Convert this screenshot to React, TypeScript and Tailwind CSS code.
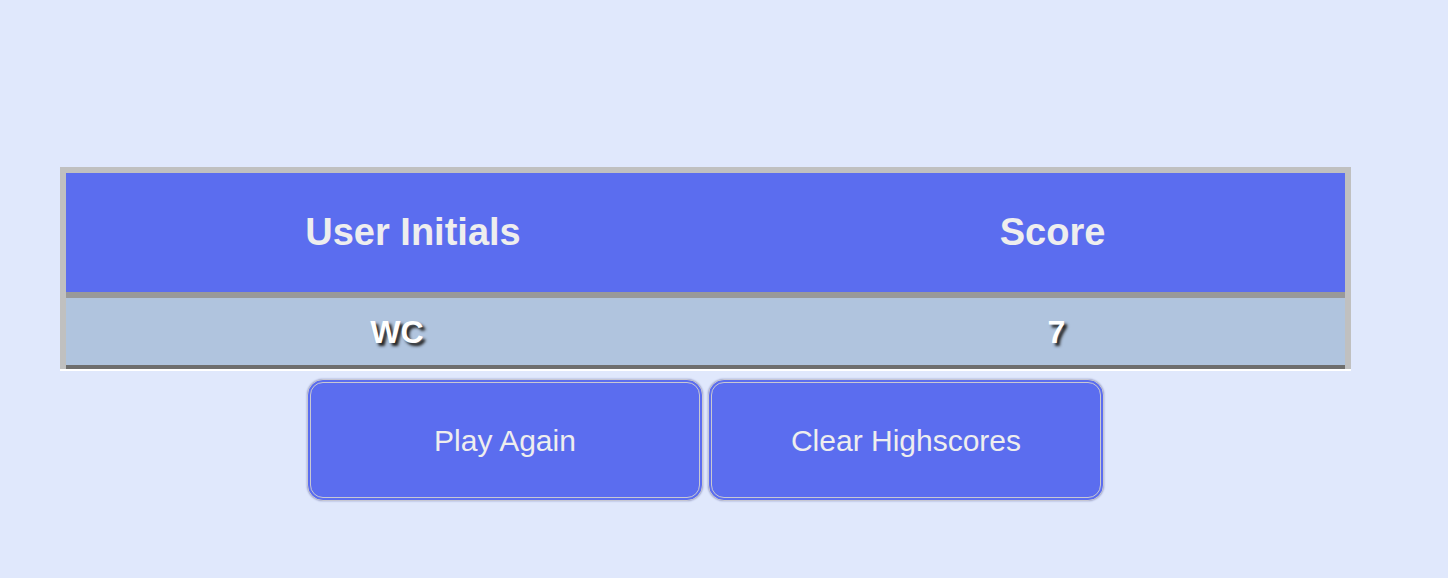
import React from "react";

const scores = [{ initials: "WC", score: 7 }];

export default function App() {
  return (
    <div
      className="min-h-[578px] w-full bg-[#e0e8fc] pt-[167px]"
      style={{ fontFamily: '"Liberation Sans", Arial, Helvetica, sans-serif' }}
    >
      <div className="ml-[60px] w-[1291px]">
        {/* Highscore table */}
        <div className="border-x-[6px] border-t-[6px] border-[#c0c0c0]">
          <div className="grid grid-cols-[694px_1fr] h-[119px] bg-[#5b6def] text-[38px] font-bold text-[#eeeeee]">
            <div className="flex items-center justify-center">User Initials</div>
            <div className="flex items-center justify-center">Score</div>
          </div>
          <div className="h-[6px] bg-[#999999]" />
          {scores.map((s) => (
            <div
              key={s.initials}
              className="grid grid-cols-[694px_1fr] h-[67px] bg-[#b0c4de] text-[32px] font-bold text-white [text-shadow:3px_3px_3px_#222]"
            >
              <div className="flex items-center justify-center pr-[32px]">{s.initials}</div>
              <div className="flex items-center justify-center pl-[8px]">{s.score}</div>
            </div>
          ))}
          <div className="h-[4px] bg-[#6e6e6e]" />
        </div>
        <div className="h-[2px] bg-white" />

        {/* Buttons */}
        <div className="flex justify-center gap-[5px] mt-[8px]">
          <button className="w-[396px] h-[122px] rounded-[16px] border-[4px] border-double border-[#c8c8d2] bg-[#5b6def] text-[30px] text-[#eeeeee] shadow-[0_0_2px_#8890c0]">
            Play Again
          </button>
          <button className="w-[396px] h-[122px] rounded-[16px] border-[4px] border-double border-[#c8c8d2] bg-[#5b6def] text-[30px] text-[#eeeeee] shadow-[0_0_2px_#8890c0]">
            Clear Highscores
          </button>
        </div>
      </div>
    </div>
  );
}
